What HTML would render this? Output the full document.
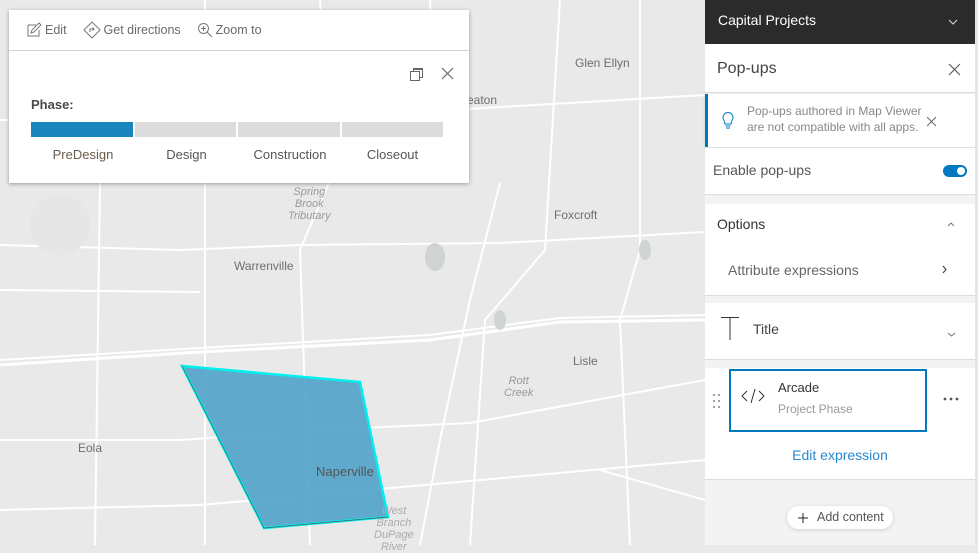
<!DOCTYPE html>
<html><head><meta charset="utf-8"><style>
*{box-sizing:border-box;margin:0;padding:0}
body{width:978px;height:545px;overflow:hidden;position:relative;background:#e9e9e9;font-family:"Liberation Sans",sans-serif}
.map{position:absolute;left:0;top:0}
.lbl{position:absolute;font-size:12px;color:#6e6e6e}
.it{font-style:italic;color:#999;font-size:11px;text-align:center;line-height:12px}
.popup{position:absolute;left:9px;top:10px;width:460px;height:173px;background:#fff;box-shadow:0 1px 4px rgba(0,0,0,.35)}
.tb{height:41px;border-bottom:1px solid #d4d4d4;display:flex;align-items:center;padding-left:17px;font-size:12.5px;color:#6a6a6a}
.tb span{display:flex;align-items:center;margin-right:16px}
.tb svg{margin-right:3px}
.panel{position:absolute;left:705px;top:0;width:270px;height:545px;background:#f3f3f3}
.sb{position:absolute;left:975px;top:0;width:3px;height:545px;background:#e6e6e6}
.row{position:absolute;left:0;width:270px;background:#fff}
</style></head><body>
<svg class="map" width="705" height="545" viewBox="0 0 705 545">
<g fill="none" stroke="#fff" stroke-width="2">
<path d="M0 360 L200 348 L430 335 L560 318 L705 315"/>
<path d="M0 365 L200 352 L430 340 L560 322 L705 320" stroke-width="3"/>
<path d="M0 245 L180 250 L300 245 L500 243 L705 232"/>
<path d="M0 440 L180 440 L320 430 L470 423 L705 380"/>
<path d="M0 510 L200 505 L705 460"/>
<path d="M205 0 L205 545"/>
<path d="M100 180 L95 545"/>
<path d="M560 0 L545 250 L485 320 L470 545"/>
<path d="M640 0 L640 250 L620 320 L630 545"/>
<path d="M500 183 L470 300 L440 440 L420 545"/>
<path d="M320 0 L330 180 L300 250 L310 545"/>
<path d="M0 120 L450 110 L705 95"/>
<path d="M430 0 L440 180"/>
<path d="M0 290 L200 292"/>
<path d="M600 470 L705 500"/>
</g>
<g fill="#cfd3d3">
<ellipse cx="60" cy="225" rx="30" ry="30" fill="#e6e6e6"/>
<ellipse cx="500" cy="320" rx="6" ry="10"/>
<ellipse cx="435" cy="257" rx="10" ry="14"/>
<ellipse cx="645" cy="250" rx="6" ry="10"/>
</g>
<polygon points="182,366 360,382 388,517 264,528" fill="#4a9fc7" fill-opacity="0.88" stroke="#00f0f0" stroke-width="2.5"/>
<path d="M182 366 L264 528 L388 517" fill="none" stroke="#555" stroke-width="0.7"/>
</svg>
<div class="lbl" style="left:575px;top:56px">Glen Ellyn</div>
<div class="lbl" style="left:467px;top:93px">eaton</div>
<div class="lbl" style="left:554px;top:208px">Foxcroft</div>
<div class="lbl" style="left:234px;top:259px">Warrenville</div>
<div class="lbl" style="left:573px;top:354px">Lisle</div>
<div class="lbl" style="left:78px;top:441px">Eola</div>
<div class="lbl" style="left:316px;top:464px;font-size:13px;color:#555">Naperville</div>
<div class="lbl it" style="left:288px;top:186px">Spring<br>Brook<br>Tributary</div>
<div class="lbl it" style="left:504px;top:375px">Rott<br>Creek</div>
<div class="lbl it" style="left:374px;top:505px;color:#aaa">West<br>Branch<br>DuPage<br>River</div>

<div class="popup">
<div class="tb">
<span><svg width="16" height="16" viewBox="0 0 16 16" fill="none" stroke="#777" stroke-width="1"><path d="M2 3h8M2 3v11h11v-6"/><path d="M5 11l1-3 7-7 2 2-7 7z"/></svg>Edit</span>
<span><svg width="18" height="18" viewBox="0 0 18 18" fill="none" stroke="#777" stroke-width="1"><path d="M9 1l8 8-8 8-8-8z"/><path d="M7 11V8h4M9.5 6.5L11 8 9.5 9.5"/></svg>Get directions</span>
<span><svg width="16" height="16" viewBox="0 0 16 16" fill="none" stroke="#777" stroke-width="1"><circle cx="6.5" cy="6.5" r="5"/><path d="M10 10l5 5M6.5 4v5M4 6.5h5"/></svg>Zoom to</span>
</div>
<svg style="position:absolute;left:400px;top:56px" width="16" height="16" viewBox="0 0 16 16" fill="none" stroke="#666"><rect x="1.5" y="5.5" width="9" height="9"/><path d="M4.5 5.5V2.5h9v9h-3M4.5 3.5h9"/></svg>
<svg style="position:absolute;left:432px;top:57px" width="13" height="13" viewBox="0 0 13 13" stroke="#666" stroke-width="1.2"><path d="M1 1l11 11M12 1L1 12"/></svg>
<div style="position:absolute;left:22px;top:87px;font-size:13px;font-weight:bold;color:#4a4a4a">Phase:</div>
<div style="position:absolute;left:22px;top:112px;width:102px;height:15px;background:#1a86bd"></div>
<div style="position:absolute;left:126px;top:112px;width:101px;height:15px;background:#dcdcdc"></div>
<div style="position:absolute;left:229px;top:112px;width:102px;height:15px;background:#dcdcdc"></div>
<div style="position:absolute;left:333px;top:112px;width:101px;height:15px;background:#dcdcdc"></div>
<div style="position:absolute;top:137px;left:22px;width:412px;display:flex;font-size:13px;color:#555">
<div style="width:104px;text-align:center;color:#6b5c4a">PreDesign</div><div style="width:103px;text-align:center">Design</div><div style="width:104px;text-align:center">Construction</div><div style="width:101px;text-align:center">Closeout</div></div>
</div>

<div class="panel">
<div class="row" style="top:0;height:44px;background:#2b2b2b;color:#fff;font-size:14px;padding:12px 0 0 13px">Capital Projects
<svg style="position:absolute;left:243px;top:19px" width="10" height="6" viewBox="0 0 10 6" fill="none" stroke="#ddd"><path d="M1 1l4 4 4-4"/></svg></div>
<div class="row" style="top:44px;height:49px;border-bottom:1px solid #ddd;font-size:16px;color:#444;padding:16px 0 0 12px">Pop-ups
<svg style="position:absolute;left:243px;top:19px" width="13" height="13" viewBox="0 0 13 13" stroke="#555" stroke-width="1.1"><path d="M1 1l11 11M12 1L1 12"/></svg></div>
<div class="row" style="top:94px;height:53px;border-left:3px solid #0079c1;box-shadow:0 1px 3px rgba(0,0,0,.12);font-size:12px;color:#888;line-height:16px;padding:9px 0 0 39px">Pop-ups authored in Map Viewer<br>are not compatible with all apps.
<svg style="position:absolute;left:14px;top:18px" width="12" height="18" viewBox="0 0 12 18" fill="none" stroke="#0079c1"><path d="M3 12c0-3-2-4-2-6.5a5 5 0 0110 0c0 2.5-2 3.5-2 6.5zM3.5 14h5M4 16h4"/></svg>
<svg style="position:absolute;left:219px;top:23px" width="9" height="9" viewBox="0 0 9 9" stroke="#666"><path d="M0 0l9 9M9 0L0 9"/></svg></div>
<div class="row" style="top:148px;height:47px;border-bottom:1px solid #ddd;background:#fff;font-size:14px;color:#555;padding:14px 0 0 8px">Enable pop-ups
<div style="position:absolute;left:238px;top:17px;width:24px;height:12px;border-radius:6px;background:#0079c1"><div style="position:absolute;right:2px;top:2px;width:8px;height:8px;border-radius:50%;background:#fff"></div></div></div>
<div class="row" style="top:204px;height:92px;border-bottom:1px solid #ddd">
<div style="position:absolute;left:12px;top:12px;font-size:14px;color:#333">Options</div>
<svg style="position:absolute;left:242px;top:18px" width="8" height="5" viewBox="0 0 8 5" fill="none" stroke="#777"><path d="M1 4l3-3 3 3"/></svg>
<div style="position:absolute;left:23px;top:58px;font-size:14px;color:#666">Attribute expressions</div>
<svg style="position:absolute;left:237px;top:61px" width="5" height="9" viewBox="0 0 5 9" fill="none" stroke="#333"><path d="M1 1l3 3.5L1 8"/></svg></div>
<div class="row" style="top:303px;height:57px;border-bottom:1px solid #ddd">
<svg style="position:absolute;left:15px;top:13px" width="20" height="24" viewBox="0 0 20 24" stroke="#333"><path d="M1 1.5h18M10 1.5V24"/></svg>
<div style="position:absolute;left:48px;top:18px;font-size:14px;color:#444">Title</div>
<svg style="position:absolute;left:242px;top:29px" width="9" height="5" viewBox="0 0 9 5" fill="none" stroke="#777"><path d="M1 1l3.5 3L8 1"/></svg></div>
<div class="row" style="top:368px;height:112px;border-bottom:1px solid #ddd">
<svg style="position:absolute;left:7px;top:25px" width="10" height="16" viewBox="0 0 10 16" fill="#999"><circle cx="2" cy="2" r="1.1"/><circle cx="7" cy="2" r="1.1"/><circle cx="2" cy="8" r="1.1"/><circle cx="7" cy="8" r="1.1"/><circle cx="2" cy="14" r="1.1"/><circle cx="7" cy="14" r="1.1"/></svg>
<div style="position:absolute;left:24px;top:1px;width:198px;height:63px;border:2px solid #0079c1"></div>
<svg style="position:absolute;left:36px;top:20px" width="24" height="16" viewBox="0 0 24 16" fill="none" stroke="#333"><path d="M6 3L1 8l5 5M18 3l5 5-5 5M14 1l-4 14"/></svg>
<div style="position:absolute;left:73px;top:12px;font-size:13px;color:#333">Arcade</div>
<div style="position:absolute;left:73px;top:34px;font-size:12px;color:#999">Project Phase</div>
<svg style="position:absolute;left:238px;top:29px" width="16" height="4" viewBox="0 0 16 4" fill="#555"><circle cx="2" cy="2" r="1.4"/><circle cx="8" cy="2" r="1.4"/><circle cx="14" cy="2" r="1.4"/></svg>
<div style="position:absolute;left:0;width:270px;top:79px;text-align:center;font-size:14px;color:#2a8ad0">Edit expression</div></div>
<div style="position:absolute;left:82px;top:506px;width:106px;height:23px;border-radius:12px;background:#fff;box-shadow:0 1px 4px rgba(0,0,0,.15);font-size:12.5px;color:#555;padding:4px 0 0 30px">Add content
<svg style="position:absolute;left:11px;top:7px" width="10" height="10" viewBox="0 0 10 10" stroke="#222"><path d="M5 0v10M0 5h10"/></svg></div>
</div>
<div class="sb"></div>
</body></html>
